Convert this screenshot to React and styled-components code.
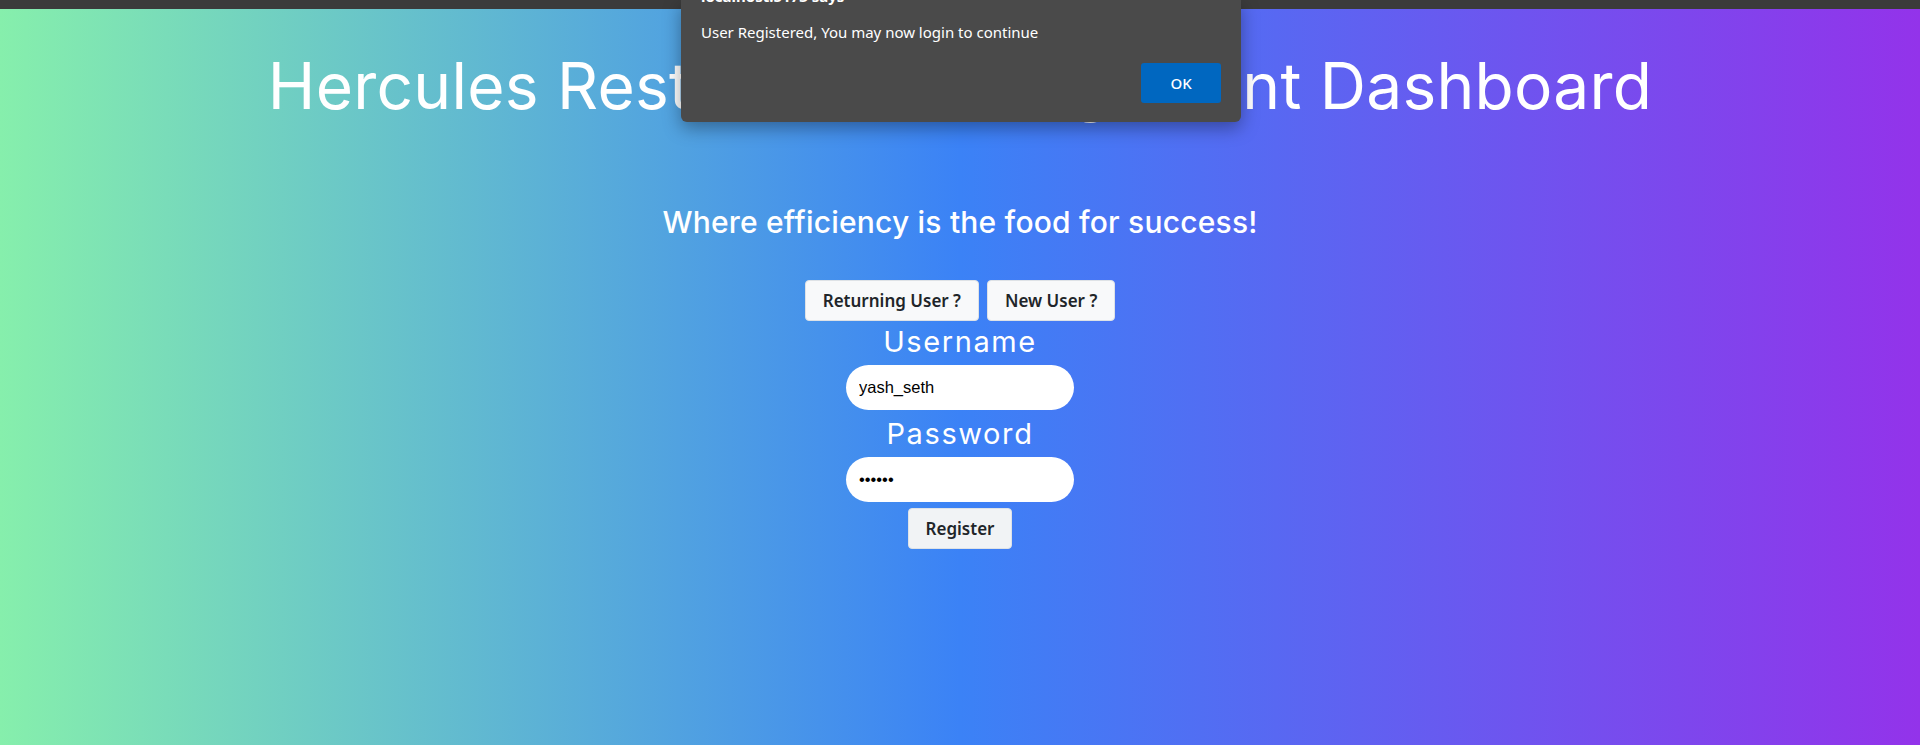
import styled, { createGlobalStyle } from "styled-components";

const GlobalStyle = createGlobalStyle`
    html, body {
        margin: 0;
        padding: 0;
    }
    body {
        font-family: Inter, "Noto Sans", sans-serif;
        overflow: hidden;
    }
`;

function AlertBox() {
    return (
        <AlertStyles>
            <h4>localhost:5173 says</h4>
            <p>User Registered, You may now login to continue</p>
            <AlertFooter>
                <OkButton>OK</OkButton>
            </AlertFooter>
        </AlertStyles>
    );
}

function Field({ label, type, value }) {
    return (
        <>
            <FieldLabel>{label}</FieldLabel>
            <FieldInput type={type} defaultValue={value} />
        </>
    );
}

export default function App() {
    return (
        <PageStyles>
            <GlobalStyle />
            <TopStrip />
            <MainStyles>
                <header>
                    <h1>Hercules Restaurant Management Dashboard</h1>
                </header>
                <Tagline>Where efficiency is the food for success!</Tagline>
                <ToggleRow>
                    <PlainButton>Returning User ?</PlainButton>
                    <PlainButton>New User ?</PlainButton>
                </ToggleRow>
                <FormStyles onSubmit={(e) => e.preventDefault()}>
                    <Field label="Username" type="text" value="yash_seth" />
                    <Field label="Password" type="password" value="secret" />
                    <PlainButton $grey type="submit">Register</PlainButton>
                </FormStyles>
            </MainStyles>
            <AlertBox />
        </PageStyles>
    );
}

const PageStyles = styled.div`
    width: 100%;
    height: 745px;
    display: flex;
    flex-direction: column;
    position: relative;
`;

const TopStrip = styled.div`
    height: 9px;
    background: #3b3b3b;
    flex-shrink: 0;
`;

const MainStyles = styled.section`
    flex: 1;
    display: flex;
    flex-direction: column;
    align-items: center;
    background: linear-gradient(90deg, #86efac, #3b82f6, #9333ea);
    color: #ffffff;

    header h1 {
        margin: 45px 0 0;
        font-size: 64px;
        font-weight: 400;
        line-height: 1;
        letter-spacing: 0.25px;
    }
`;

const Tagline = styled.h2`
    margin: 89px 0 0;
    font-size: 30px;
    font-weight: 500;
    line-height: 1;
    letter-spacing: 0.2px;
`;

const ToggleRow = styled.div`
    display: flex;
    gap: 8px;
    margin-top: 43px;
`;

const PlainButton = styled.button`
    height: 41px;
    padding: 0 17px;
    font-family: "Noto Sans", sans-serif;
    font-size: 17px;
    font-weight: 600;
    color: #212529;
    background: ${(p) => (p.$grey ? "#f1f3f5" : "#f8f9fa")};
    border: 1px solid #dee2e6;
    border-radius: 4px;
    cursor: pointer;
`;

const FormStyles = styled.form`
    display: flex;
    flex-direction: column;
    align-items: center;
    gap: 6px;
    margin-top: 3px;
`;

const FieldLabel = styled.label`
    font-size: 29px;
    font-weight: 400;
    line-height: 34px;
    letter-spacing: 1.6px;
    margin-top: 1px;
`;

const FieldInput = styled.input`
    box-sizing: border-box;
    width: 228px;
    height: 45px;
    padding: 0 13px;
    border: none;
    border-radius: 23px;
    font-family: "Liberation Sans", Arial, sans-serif;
    font-size: 16.5px;
    color: #000000;
    background: #ffffff;
    outline: none;
`;

const AlertStyles = styled.div`
    position: absolute;
    top: 0;
    left: 681px;
    width: 560px;
    height: 122px;
    box-sizing: border-box;
    padding: 0 20px;
    background: #4a4a4a;
    border-radius: 0 0 6px 6px;
    box-shadow: 0 6px 18px rgba(0, 0, 0, 0.35);
    color: #ffffff;
    font-family: "Noto Sans", "Open Sans", sans-serif;

    h4 {
        margin: -14px 0 0;
        font-size: 15px;
        font-weight: 700;
        line-height: 20px;
    }

    p {
        margin: 16px 0 0;
        font-size: 15px;
        line-height: 20px;
    }
`;

const AlertFooter = styled.div`
    display: flex;
    justify-content: flex-end;
    margin-top: 21px;
`;

const OkButton = styled.button`
    width: 80px;
    height: 40px;
    border: none;
    border-radius: 3px;
    background: #0067c0;
    color: #ffffff;
    font-family: "Noto Sans", sans-serif;
    font-size: 15px;
    font-weight: 500;
`;
